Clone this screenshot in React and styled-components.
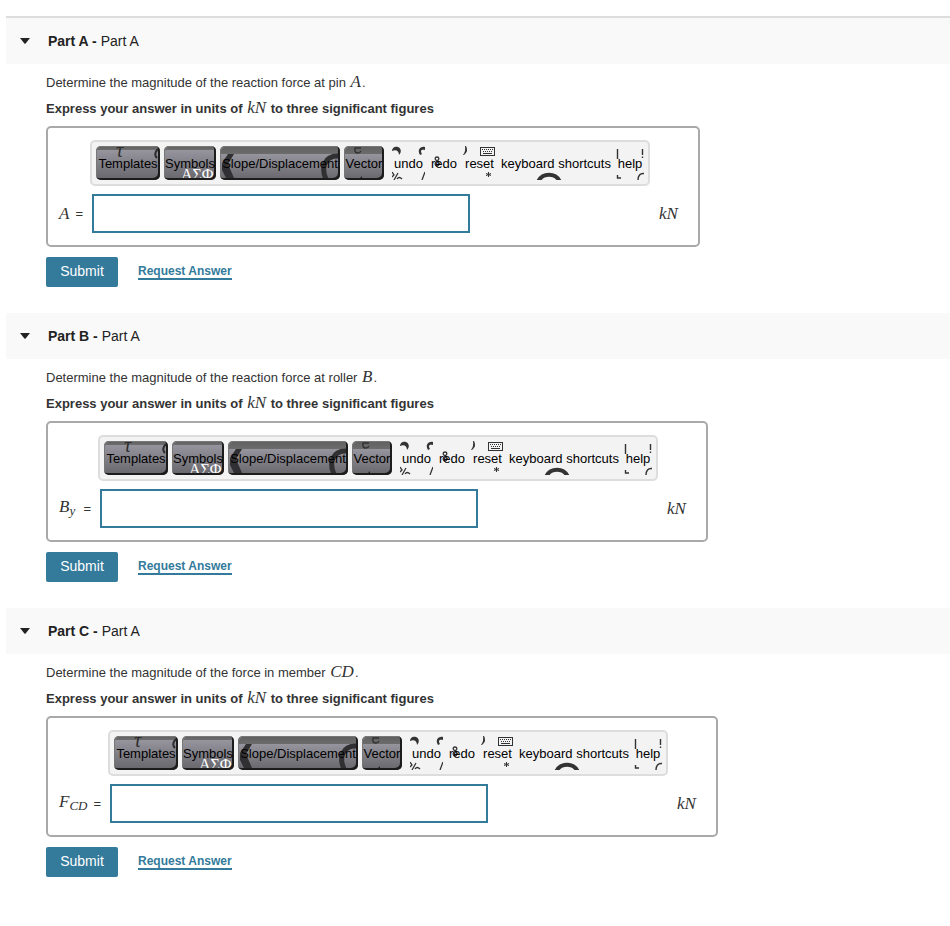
import React, { useState } from "react"
import styled, { createGlobalStyle } from "styled-components"

const parts = [
   {
      id: "a",
      name: "Part A",
      text: "Determine the magnitude of the reaction force at pin",
      target: "A",
      symbol: "A",
      labelWidth: "42px",
   },
   {
      id: "b",
      name: "Part B",
      text: "Determine the magnitude of the reaction force at roller",
      target: "B",
      symbol: "B",
      sub: "y",
      labelWidth: "50px",
   },
   {
      id: "c",
      name: "Part C",
      text: "Determine the magnitude of the force in member",
      target: "CD",
      symbol: "F",
      sub: "CD",
      labelWidth: "60px",
   },
]

function Toolbar() {
   return (
      <ToolbarBox role="toolbar" aria-label="Equation tools">
         <DarkButton type="button" $width="64px" $strip="4px">
            <Art>
               <SerifText x="20" y="11" fontSize="20" fontStyle="italic">
                  τ
               </SerifText>
               <path
                  d="M62 3Q57 8 61 12"
                  fill="none"
                  stroke="#2c2c2c"
                  strokeWidth="2"
               />
            </Art>
            <span>Templates</span>
         </DarkButton>
         <DarkButton type="button" $width="52px" $strip="4px">
            <Art>
               <SerifText x="17" y="34" fontSize="16" $color="#ffffff">
                  ΑΣΦ
               </SerifText>
            </Art>
            <span>Symbols</span>
         </DarkButton>
         <DarkButton type="button" $width="120px" $strip="8px">
            <Art>
               <path d="M8 8H14L8 18L14 32H6L2 24V17Z" fill="#303032" />
               <path
                  d="M118 10C104 10 101 22 106 33"
                  fill="none"
                  stroke="#303032"
                  strokeWidth="5"
               />
            </Art>
            <span>Slope/Displacement</span>
         </DarkButton>
         <DarkButton type="button" $width="40px" $strip="8px">
            <Art>
               <path
                  d="M17 2H11Q10 7 14 7Q16 7 17 5"
                  fill="none"
                  stroke="#333333"
                  strokeWidth="1.5"
               />
               <path d="M16 32L18 30V32Z" fill="#222222" />
            </Art>
            <span>Vector</span>
         </DarkButton>
         <Spacer />
         <FlatButton type="button" $width="33px">
            <Art>
               <path d="M0 5C0 1 4 0 6 1C9 2 10 6 7 9C7 5 4 3 0 5Z" />
               <path d="M28 9C25 4 28 0 33 1V4C29 3 28 5 30 8Z" />
               <path
                  d="M0 26L2 29L0 31M6 27L2 34M5 33Q7 30 10 33M33 26L30 34"
                  fill="none"
                  stroke="#333333"
                  strokeWidth="1.3"
               />
            </Art>
            <span>undo</span>
         </FlatButton>
         <FlatButton type="button" $width="30px">
            <Art>
               <path
                  d="M8 15C5 13 6 11 8 11S11 13 8 15C5 17 6 20 8 20S11 17 8 15M9 15L11 19"
                  fill="none"
                  stroke="#333333"
                  strokeWidth="1.3"
               />
            </Art>
            <span>redo</span>
         </FlatButton>
         <FlatButton type="button" $width="33px">
            <Art>
               <path d="M2 0H3Q6 5 1 9H0Q3 5 2 0Z" />
               <rect
                  x="17.5"
                  y="1.5"
                  width="14"
                  height="8"
                  fill="none"
                  stroke="#333333"
               />
               <path
                  d="M19 3.5H30M20 5.5H30"
                  stroke="#333333"
                  strokeDasharray="1 1"
               />
               <path d="M20 7.5H29" stroke="#333333" />
               <path
                  d="M25.5 26V31M23 27.5L28 29.5M28 27.5L23 29.5"
                  stroke="#333333"
               />
            </Art>
            <span>reset</span>
         </FlatButton>
         <FlatButton type="button" $width="112px">
            <Art>
               <path
                  d="M38 36A12 12 0 0 1 60 36"
                  fill="none"
                  stroke="#333333"
                  strokeWidth="4"
               />
            </Art>
            <span>keyboard shortcuts</span>
         </FlatButton>
         <FlatButton type="button" $width="28px">
            <Art>
               <path
                  d="M1.5 3V13M26.5 3V9M26.5 10.5V12M1.5 29V32H5M28 27.5C24 27 22 30 22 34"
                  fill="none"
                  stroke="#333333"
                  strokeWidth="1.4"
               />
            </Art>
            <span>help</span>
         </FlatButton>
      </ToolbarBox>
   )
}

function Part({ part }) {
   const [open, setOpen] = useState(true)
   const [answer, setAnswer] = useState("")
   const inputId = `answer-${part.id}`

   return (
      <section>
         <Heading>
            <Toggle
               type="button"
               aria-expanded={open}
               onClick={() => setOpen(!open)}
            >
               <Arrow viewBox="0 0 10 6" $open={open}>
                  <path d="M0 0H10L5.6 5.6Q5 6 4.4 5.6Z" />
               </Arrow>
               <span>
                  <b>{part.name} -</b> Part A
               </span>
            </Toggle>
         </Heading>
         {open && (
            <Body onSubmit={(e) => e.preventDefault()}>
               <Question>
                  {part.text} <Math>{part.target}</Math>.
               </Question>
               <Question as="h3">
                  Express your answer in units of <Math>kN</Math> to three
                  significant figures
               </Question>
               <AnswerBox $label={part.labelWidth}>
                  <Toolbar />
                  <Label htmlFor={inputId}>
                     <Math>
                        {part.symbol}
                        {part.sub && <sub>{part.sub}</sub>}
                     </Math>
                     <span>=</span>
                  </Label>
                  <Input
                     id={inputId}
                     type="text"
                     autoComplete="off"
                     value={answer}
                     onChange={(e) => setAnswer(e.target.value)}
                  />
                  <Unit>kN</Unit>
               </AnswerBox>
               <Actions>
                  <Submit type="submit">Submit</Submit>
                  <RequestLink href="#request">Request Answer</RequestLink>
               </Actions>
            </Body>
         )}
      </section>
   )
}

function App() {
   return (
      <>
         <GlobalStyle />
         <Page>
            {parts.map((part) => (
               <Part key={part.id} part={part} />
            ))}
         </Page>
      </>
   )
}
export default App

const GlobalStyle = createGlobalStyle`
   * {
      box-sizing: border-box;
   }
   body {
      margin: 0;
      background: #ffffff;
      color: #333333;
      font-family: "Liberation Sans", Arial, sans-serif;
      font-size: 13px;
   }
   button, input {
      font-family: inherit;
   }
`
const Page = styled.main`
   margin: 16px 0 0 6px;
   border-top: 2px solid #dddddd;
`
const Heading = styled.h2`
   margin: 0;
   background: #f9f9f9;
   font-size: 14px;
   font-weight: 400;
`
const Toggle = styled.button`
   display: flex;
   align-items: center;
   gap: 18px;
   width: 100%;
   height: 46px;
   padding: 0 14px;
   border: 0;
   background: none;
   color: #222222;
   font-size: 14px;
   text-align: left;
   cursor: pointer;
`
const Arrow = styled.svg`
   width: 10px;
   height: 6px;
   fill: #222222;
   transform: ${({ $open }) => ($open ? "none" : "rotate(-90deg)")};
`
const Body = styled.form`
   padding: 10px 0 26px 40px;
`
const Question = styled.p`
   margin: 0 0 8px;
   font-size: 13px;
   line-height: 18px;
`
const Math = styled.i`
   margin: 0 1px;
   font-family: "Liberation Serif", "Times New Roman", serif;
   font-size: 17px;
   font-weight: 400;
   line-height: 0;
   sub {
      font-size: 13px;
      vertical-align: -3px;
   }
`
const AnswerBox = styled.div`
   display: grid;
   grid-template-columns: ${({ $label }) => $label} auto 48px;
   row-gap: 8px;
   width: fit-content;
   padding: 12px 0;
   border: 2px solid #a9a9a9;
   border-radius: 5px;
`
const ToolbarBox = styled.div`
   grid-column: 2;
   display: flex;
   gap: 4px;
   padding: 4px;
   border: 2px solid #dddddd;
   border-radius: 5px;
   background: #f3f3f3;
`
const ToolButton = styled.button`
   position: relative;
   display: flex;
   align-items: center;
   justify-content: center;
   width: ${({ $width }) => $width};
   height: 34px;
   padding: 0;
   border: 0;
   color: #000000;
   font-size: 13px;
   white-space: nowrap;
   cursor: pointer;
   span {
      position: relative;
   }
`
const Art = styled.svg.attrs({ "aria-hidden": true })`
   position: absolute;
   top: 0;
   left: 0;
   width: 100%;
   height: 100%;
   overflow: hidden;
   fill: #333333;
`
const DarkButton = styled(ToolButton)`
   overflow: hidden;
   border-radius: 5px;
   box-shadow: inset -2px -2px 0 #1c1c1c, inset 1px 1px 0 #777777;
   background: linear-gradient(
      #606060,
      #6c6c6c ${({ $strip }) => $strip},
      #96949d ${({ $strip }) => $strip},
      #67666b
   );
   ${Art} {
      width: calc(100% - 2px);
      height: 32px;
   }
`
const FlatButton = styled(ToolButton)`
   background: none;
`
const Spacer = styled.div`
   width: 0;
`
const SerifText = styled.text`
   font-family: "Liberation Serif", serif;
   fill: ${({ $color }) => $color || "#2c2c2c"};
`
const Label = styled.label`
   grid-column: 1;
   display: flex;
   align-items: center;
   justify-content: space-between;
   padding: 0 7px 0 10px;
`
const Input = styled.input`
   width: 378px;
   height: 39px;
   margin-left: 2px;
   padding: 0 8px;
   border: 2px solid #337a9b;
   border-radius: 0;
   background: #ffffff;
   color: #333333;
   font-size: 14px;
   outline: 0;
`
const Unit = styled(Math)`
   align-self: center;
   padding-left: 8px;
`
const Actions = styled.div`
   display: flex;
   align-items: center;
   gap: 20px;
   margin-top: 10px;
`
const Submit = styled.button`
   width: 72px;
   height: 30px;
   padding: 0 0 3px;
   border: 0;
   border-radius: 2px;
   background: #337a9b;
   color: #ffffff;
   font-size: 14px;
   cursor: pointer;
`
const RequestLink = styled.a`
   border-bottom: 2px solid #337a9b;
   color: #337a9b;
   font-size: 12px;
   font-weight: 700;
   line-height: 14px;
   text-decoration: none;
`
